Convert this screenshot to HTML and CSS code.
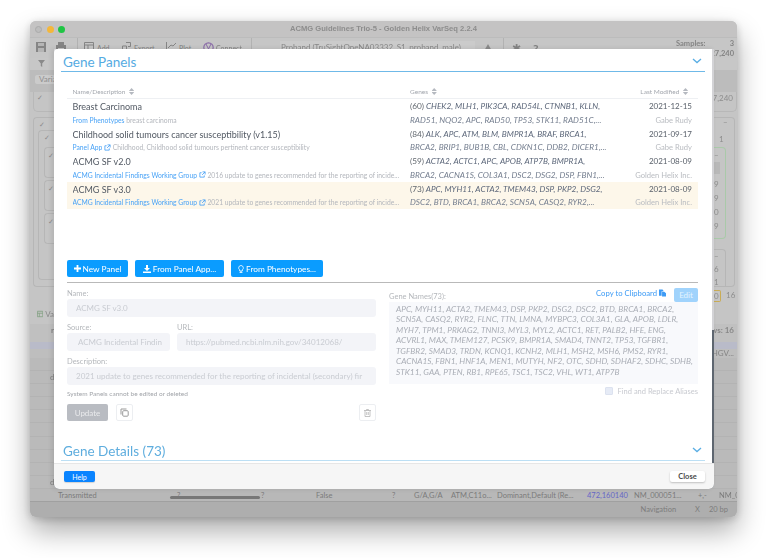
FILE: index.html
```html
<!DOCTYPE html>
<html lang="en">
<head>
<meta charset="utf-8">
<title>ACMG Guidelines Trio-5 - Golden Helix VarSeq 2.2.4</title>
<link rel="stylesheet" href="styles.css">
</head>
<body>
<div class="desktop">
  <div class="window">
    <div class="backdrop">
      <div class="titlebar">
        <span class="light l-grey"></span><span class="light l-yellow"></span><span class="light l-green"></span>
        <span class="title">ACMG Guidelines Trio-5 - Golden Helix VarSeq 2.2.4</span>
      </div>
      <div class="toolbar">
        <svg class="tool" width="10" height="10" viewBox="0 0 10 10"><path d="M0 0h10v10H0z" fill="#858585"/><path d="M2 1h6v3H2zM2 6h6v4H2z" fill="#b5b5b5"/></svg>
        <svg class="tool t2" width="10" height="10" viewBox="0 0 10 10"><path d="M2 0h6v3H2zM0 3h10v5H8V6H2v2H0zM3 7h4v3H3z" fill="#858585"/></svg>
        <span class="sep"></span>
        <span class="tbtn t-add"><svg width="10" height="9" viewBox="0 0 10 9"><path d="M.5.5h9v8h-9zM.5 3h9M4 3v5.5" fill="none" stroke="#858585"/></svg>Add</span>
        <span class="tbtn t-export"><svg width="9" height="9" viewBox="0 0 9 9"><path d="M.5 4h4v4.500h-4zM4 .5h4.500v4H6" fill="none" stroke="#858585"/></svg>Export</span>
        <span class="tbtn t-plot"><svg width="10" height="9" viewBox="0 0 10 9"><path d="M.5 0v8.500H10M2 6l3-3 2 1 3-3" fill="none" stroke="#858585"/></svg>Plot</span>
        <span class="tbtn t-connect"><svg width="11" height="11" viewBox="0 0 11 11"><circle cx="5.500" cy="5.500" r="4.700" fill="none" stroke="#8a6ba8" stroke-width="1.200"/><path d="M3 2l2.500 5L8 2" fill="none" stroke="#8a6ba8"/></svg>Connect</span>
        <span class="sep s2"></span>
        <span class="sel">Proband (TruSightOneNA03332_S1_proband_male)</span>
        <span class="tri"></span>
        <span class="sep s3"></span>
        <span class="gear">✱</span><span class="qm">?</span>
        <span class="samples"><span class="sline"><span>Samples:</span><span>3</span></span><span class="sline sr">27,240</span></span>
      </div>
      <div class="band-light"><svg width="7" height="7" viewBox="0 0 7 7"><path d="M0 0h7L4.200 3.500V7L2.800 6V3.500z" fill="#8a8a8a"/></svg></div>
      <div class="band-dark"><span class="pill">Varia</span></div>
      <div class="work">
        <div class="lside">
          <div class="count-row"><span class="chk">✓</span></div>
          <div class="panel-outer">
            <span class="chk">✓</span>
            <div class="panel-in">
              <span class="chk">✓</span>
              <div class="sub-box"><span class="chk">✓</span></div>
              <div class="sub-box"><span class="chk">✓</span></div>
              <div class="sub-box"><span class="chk">✓</span></div>
            </div>
          </div>
          <div class="tab-row"><svg width="8" height="8" viewBox="0 0 8 8"><path d="M.5.5h7v7h-7zM.5 3h7M3 3v4.500" fill="none" stroke="#7f9f7f"/></svg><span>Va</span></div>
        </div>
        <div class="rside">
          <div class="r-count">27,240</div>
          <div class="r-panel">
            <div class="minus">–</div>
            <div class="num">1</div>
            <div class="green-box"><div>–</div><div class="cell"></div><div>9</div><div>9</div><div>0</div><div>9</div></div>
            <div class="plain-box"><div>–</div><div>6</div><div>1</div></div>
          </div>
          <div class="tot"><span class="orange">0</span><span>16</span></div>
        </div>
      </div>
      <div class="tabs2"><span class="pill2">ria</span><span class="rowcount">Rows: 16</span></div>
      <div class="thead2"></div>
      <div class="hgv-row"><span>HGV...</span></div>
      <div class="grid-rows">
        <div class="grow"></div><div class="grow">d</div><div class="grow"></div><div class="grow"></div><div class="grow"></div>
        <div class="grow"></div><div class="grow"></div><div class="grow"></div><div class="grow"></div><div class="grow">d</div>
      </div>
      <div class="data-row">
        <span class="c-a">Transmitted</span><span class="c-b">?</span><span class="c-c">?</span><span class="c-d">False</span><span class="c-e">?</span><span class="c-f">G/A,G/A</span><span class="c-g">ATM,C11o...</span><span class="c-h">Dominant,Default (Re...</span><span class="c-i">472,160140</span><span class="c-j">NM_000051...</span><span class="c-k">+,-</span><span class="c-l">NM_0</span>
      </div>
      <div class="status"><span class="hscroll"></span><span>Navigation</span><span class="st-x">X</span><span>20 bp</span></div>
    </div>

    <div class="modal">
      <div class="modal-body">
        <div class="sec-head"><h2>Gene Panels</h2><svg class="chev" width="10" height="6" viewBox="0 0 10 6"><path d="M1 1l4 3.600L9 1" fill="none" stroke="#5aaee4" stroke-width="1.300"/></svg></div>
        <div class="tbl">
          <div class="row head"><div class="col-n">Name/Description <i class="sort"></i></div><div class="col-g">Genes <i class="sort"></i></div><div class="col-d">Last Modified <i class="sort"></i></div></div>
          <div class="row item">
            <div class="col-n"><div class="nm">Breast Carcinoma</div><div class="sb"><a>From Phenotypes</a> breast carcinoma</div></div>
            <div class="col-g"><div><b>(60)</b> CHEK2, MLH1, PIK3CA, RAD54L, CTNNB1, KLLN,</div><div class="g2">RAD51, NQO2, APC, RAD50, TP53, STK11, RAD51C,...</div></div>
            <div class="col-d"><div class="dt">2021-12-15</div><div class="by">Gabe Rudy</div></div>
          </div>
          <div class="row item">
            <div class="col-n"><div class="nm">Childhood solid tumours cancer susceptibility (v1.15)</div><div class="sb"><a>Panel App <svg class="ext" viewBox="0 0 8 8"><path d="M6 5v2H1V2h2M4 1h3v3M7 1L3.500 4.500" fill="none" stroke="#3d9bf5" stroke-width=".9"/></svg></a> Childhood, Childhood solid tumours pertinent cancer susceptibility</div></div>
            <div class="col-g"><div><b>(84)</b> ALK, APC, ATM, BLM, BMPR1A, BRAF, BRCA1,</div><div class="g2">BRCA2, BRIP1, BUB1B, CBL, CDKN1C, DDB2, DICER1,...</div></div>
            <div class="col-d"><div class="dt">2021-09-17</div><div class="by">Gabe Rudy</div></div>
          </div>
          <div class="row item">
            <div class="col-n"><div class="nm">ACMG SF v2.0</div><div class="sb"><a>ACMG Incidental Findings Working Group <svg class="ext" viewBox="0 0 8 8"><path d="M6 5v2H1V2h2M4 1h3v3M7 1L3.500 4.500" fill="none" stroke="#3d9bf5" stroke-width=".9"/></svg></a> 2016 update to genes recommended for the reporting of incide...</div></div>
            <div class="col-g"><div><b>(59)</b> ACTA2, ACTC1, APC, APOB, ATP7B, BMPR1A,</div><div class="g2">BRCA2, CACNA1S, COL3A1, DSC2, DSG2, DSP, FBN1,...</div></div>
            <div class="col-d"><div class="dt">2021-08-09</div><div class="by">Golden Helix Inc.</div></div>
          </div>
          <div class="row item on">
            <div class="col-n"><div class="nm">ACMG SF v3.0</div><div class="sb"><a>ACMG Incidental Findings Working Group <svg class="ext" viewBox="0 0 8 8"><path d="M6 5v2H1V2h2M4 1h3v3M7 1L3.500 4.500" fill="none" stroke="#3d9bf5" stroke-width=".9"/></svg></a> 2021 update to genes recommended for the reporting of incide...</div></div>
            <div class="col-g"><div><b>(73)</b> APC, MYH11, ACTA2, TMEM43, DSP, PKP2, DSG2,</div><div class="g2">DSC2, BTD, BRCA1, BRCA2, SCN5A, CASQ2, RYR2,...</div></div>
            <div class="col-d"><div class="dt">2021-08-09</div><div class="by">Golden Helix Inc.</div></div>
          </div>
        </div>
        <div class="actions">
          <button class="btn b1"><svg width="7" height="7" viewBox="0 0 7 7"><path d="M2.600 0h1.800v2.600H7v1.800H4.400V7H2.600V4.400H0V2.600h2.600z" fill="#fff"/></svg> New Panel</button>
          <button class="btn b2"><svg width="8" height="8" viewBox="0 0 8 8"><path d="M3 0h2v3h2L4 6 1 3h2zM0 6.400h8V8H0z" fill="#fff"/></svg> From Panel App...</button>
          <button class="btn b3"><svg width="6" height="8" viewBox="0 0 6 8"><path d="M3 .5a2.400 2.400 0 0 1 1.400 4.300V6H1.600V4.800A2.400 2.400 0 0 1 3 .5zM2 7h2v.8H2z" fill="none" stroke="#fff" stroke-width=".8"/></svg> From Phenotypes...</button>
        </div>
        <div class="editor">
          <div class="form">
            <label class="lb l1">Name:</label>
            <div class="inp">ACMG SF v3.0</div>
            <div class="two">
              <div class="f-src"><label class="lb">Source:</label><div class="inp cut">ACMG Incidental Findin</div></div>
              <div class="f-url"><label class="lb">URL:</label><div class="inp">https://pubmed.ncbi.nlm.nih.gov/34012068/</div></div>
            </div>
            <label class="lb">Description:</label>
            <div class="inp cut">2021 update to genes recommended for the reporting of incidental (secondary) fir</div>
            <div class="note">System Panels cannot be edited or deleted</div>
            <div class="form-btns">
              <button class="upd">Update</button>
              <button class="ico"><svg width="9" height="9" viewBox="0 0 9 9"><path d="M1 6.500V1h5.500" fill="none" stroke="#9a9a9a"/><rect x="2.700" y="2.700" width="5.500" height="5.500" rx="1" fill="none" stroke="#9a9a9a"/></svg></button>
              <button class="ico trash"><svg width="7" height="8" viewBox="0 0 7 8"><path d="M0 1.500h7M2.500 1.500V.5h2v1M1 1.500v6h5v-6M2.700 3v3M4.300 3v3" fill="none" stroke="#b5b5b5" stroke-width=".8"/></svg></button>
            </div>
          </div>
          <div class="genes">
            <div class="genes-top">
              <span class="lb gl">Gene Names(73):</span>
              <span class="copy">Copy to Clipboard <svg width="7" height="8" viewBox="0 0 8 8"><path d="M0 0h4l1 1v1H3v5H0zM3.500 2.500H6L8 4.200V8H3.500z" fill="#3d9bf5"/></svg></span>
              <button class="edit">Edit</button>
            </div>
            <div class="area"><i>APC, MYH11, ACTA2, TMEM43, DSP, PKP2, DSG2, DSC2, BTD, BRCA1, BRCA2,<br>SCN5A, CASQ2, RYR2, FLNC, TTN, LMNA, MYBPC3, COL3A1, GLA, APOB, LDLR,<br>MYH7, TPM1, PRKAG2, TNNI3, MYL3, MYL2, ACTC1, RET, PALB2, HFE, ENG,<br>ACVRL1, MAX, TMEM127, PCSK9, BMPR1A, SMAD4, TNNT2, TP53, TGFBR1,<br>TGFBR2, SMAD3, TRDN, KCNQ1, KCNH2, MLH1, MSH2, MSH6, PMS2, RYR1,<br>CACNA1S, FBN1, HNF1A, MEN1, MUTYH, NF2, OTC, SDHD, SDHAF2, SDHC, SDHB,<br>STK11, GAA, PTEN, RB1, RPE65, TSC1, TSC2, VHL, WT1, ATP7B</i></div>
            <div class="alias"><span class="cb"></span>Find and Replace Aliases</div>
          </div>
        </div>
        <div class="sec-head details"><h2>Gene Details (73)</h2><svg class="chev" width="10" height="6" viewBox="0 0 10 6"><path d="M1 1l4 3.600L9 1" fill="none" stroke="#5aaee4" stroke-width="1.300"/></svg></div>
      </div>
      <div class="modal-foot"><button class="help">Help</button><button class="close">Close</button></div>
    </div>
  </div>
</div>
</body>
</html>
```
FILE: styles.css
```css
* { box-sizing: border-box; }
html, body { margin: 0; height: 100%; background: #fff; overflow: hidden; }
body { font-family: Lato, "Liberation Sans", sans-serif; }
button { font-family: inherit; border: 0; padding: 0; }
.desktop { padding: 21px 31px 0 30px; filter: blur(.5px); }
.window { position: relative; width: 707px; height: 496px; border-radius: 6px; box-shadow: 0 14px 28px rgba(0,0,0,.33), 0 2px 8px rgba(0,0,0,.18); }
.backdrop { height: 100%; display: flex; flex-direction: column; background: #bcbcbc; border-radius: 6px; overflow: hidden; color: #848484; font-size: 8px; }

.titlebar { position: relative; height: 16px; flex: none; background: #c4c3c3; display: flex; align-items: center; padding-left: 5px; gap: 4px; }
.light { width: 7px; height: 7px; border-radius: 50%; }
.l-grey { background: #bdbdbd; border: 1px solid #aaa; }
.l-yellow { background: #f4b73a; margin-left: 1px; }
.l-green { background: #1fc544; }
.title { position: absolute; left: 0; right: 0; top: 3px; text-align: center; font: bold 7.6px "Liberation Sans", sans-serif; color: #8d8d8d; }

.toolbar { height: 21px; flex: none; background: #c6c6c6; border-top: 1px solid #bcbcbc; display: flex; align-items: flex-start; font-size: 7px; }
.tool { margin: 4px 0 0 6px; flex: none; }
.t2 { margin-left: 10px; }
.sep { width: 1px; height: 19px; background: #b2b2b2; margin-left: 11px; flex: none; }
.tbtn { margin-top: 4px; display: flex; align-items: flex-start; gap: 3px; white-space: nowrap; color: #7f7f7f; line-height: 12px; flex: none; }
.t-add { margin-left: 6px; width: 38px; }
.t-export { width: 44px; }
.t-plot { width: 37px; }
.t-connect { width: 48px; gap: 2px; }
.s2 { margin-left: 0; }
.sel { margin: 3px 0 0 28px; width: 195px; height: 13px; line-height: 12px; font-size: 8px; white-space: nowrap; color: #878787; background: #cbcbcb; padding-left: 1px; flex: none; }
.tri { margin: 6px 0 0 9px; border-left: 4px solid transparent; border-right: 4px solid transparent; border-bottom: 7px solid #8a8a8a; flex: none; }
.s3 { margin-left: 11px; }
.gear { margin: 3px 0 0 8px; font-size: 11px; }
.qm { margin: 3px 0 0 12px; font-size: 12px; font-weight: bold; }
.samples { margin-left: auto; width: 61px; padding: 1px 3px 0 0; font-weight: bold; font-size: 7.5px; flex: none; }
.sline { display: flex; justify-content: space-between; line-height: 10px; }
.sr { justify-content: flex-end; }

.band-light { height: 12px; flex: none; background: #c7c7c7; padding: 2px 0 0 8px; }
.band-light svg { display: block; }
.band-dark { height: 22px; flex: none; background: #bcbcbc; padding: 4px 0 0 5px; }
.pill { display: inline-block; width: 40px; height: 9px; line-height: 9px; padding-left: 4px; background: #cbcbcb; border-radius: 2px; color: #909090; }

.work { height: 232px; flex: none; display: flex; justify-content: space-between; background: #c5c5c5; }
.lside { width: 24px; padding-left: 3px; }
.count-row { height: 20px; border: 1px solid #b8b8b8; border-top: 0; border-right: 0; border-radius: 0 0 0 5px; padding-left: 3px; }
.chk { display: block; font-size: 7px; color: #8b8b8b; line-height: 10px; }
.panel-outer { height: 170px; border: 1px solid #b6b6b6; border-right: 0; border-radius: 4px 0 0 4px; padding: 1px 0 0 5px; margin-top: 5px; }
.panel-in { border: 1px solid #b6b6b6; border-right: 0; border-radius: 4px 0 0 4px; height: 150px; margin: 1px 0 0 -1px; padding: 1px 0 0 5px; }
.sub-box { height: 31px; border: 1px solid #b6b6b6; border-right: 0; border-radius: 4px 0 0 4px; margin: 2px 0 0 0; padding: 2px 0 0 3px; }
.sub-box:first-of-type { margin-top: 5px; }
.tab-row { margin-top: 19px; height: 16px; display: flex; align-items: center; gap: 2px; padding-left: 4px; color: #8a8a8a; white-space: nowrap; }
.rside { width: 23px; font-size: 8px; color: #8d8d8d; }
.r-count { height: 20px; display: flex; justify-content: flex-end; padding: 1px 3px 0 0; white-space: nowrap; border-bottom: 1px solid #b8b8b8; border-right: 1px solid #b8b8b8; border-radius: 0 0 5px 0; }
.r-panel { height: 170px; margin-top: 5px; border: 1px solid #b6b6b6; border-left: 0; border-radius: 0 4px 4px 0; margin-right: 2px; }
.minus { padding-left: 9px; line-height: 8px; }
.num { padding-left: 5px; margin-top: 8px; line-height: 10px; }
.green-box { height: 92px; margin-top: 3px; border: 1px solid #a9c9a9; border-left: 0; border-radius: 0 4px 4px 0; width: 12px; line-height: 14px; }
.cell { height: 12px; width: 6px; background: #b8b8b8; margin-bottom: 3px; }
.plain-box { height: 37px; margin-top: 10px; border: 1px solid #b6b6b6; border-left: 0; border-bottom: 0; border-radius: 0 4px 0 0; width: 12px; line-height: 13px; }
.tot { display: flex; gap: 5px; margin-top: 3px; }
.orange { width: 7px; border: 1px solid #c9ac55; border-left: 0; border-radius: 0 2px 2px 0; height: 12px; line-height: 10px; }

.tabs2 { height: 18px; flex: none; background: #c0c0c0; display: flex; justify-content: space-between; padding: 1px 3px 0 21px; font-weight: bold; white-space: nowrap; }
.rowcount { color: #888; }
.thead2 { height: 7px; flex: none; background: #b9bbc9; }
.hgv-row { height: 9px; flex: none; background: #bebebe; text-align: right; padding-right: 3px; line-height: 9px; white-space: nowrap; }
.grid-rows { flex: 1; min-height: 0; background: #bababa; overflow: hidden; }
.grow { height: 13.100px; border-bottom: 1px solid #b3b3b3; color: #808080; line-height: 12px; padding-left: 20px; }

.data-row { height: 12px; flex: none; display: flex; align-items: center; background: #b8b8b8; white-space: nowrap; font-size: 7.5px; color: #7b7b7b; }
.c-a { margin-left: 28px; width: 119px; flex: none; }
.c-b { width: 84px; flex: none; }
.c-c { width: 55px; flex: none; }
.c-d { width: 76px; flex: none; }
.c-e { width: 22px; flex: none; }
.c-f { width: 37px; flex: none; }
.c-g { width: 46px; flex: none; }
.c-h { width: 90px; flex: none; }
.c-i { width: 47px; color: #6666c6; flex: none; }
.c-j { width: 64px; flex: none; }
.c-k { width: 21px; flex: none; }
.c-l { overflow: hidden; }
.hscroll { width: 90px; height: 3px; border-radius: 2px; background: #777; margin: -24px auto 0 140px; flex: none; }
.status { height: 16px; flex: none; background: #aeaeae; border-top: 1px solid #a0a0a0; display: flex; align-items: center; font-size: 7.5px; padding-right: 9px; color: #7d7d7d; }
.st-x { margin: 0 9px 0 19px; }

.modal { position: absolute; left: 24px; top: 28px; width: 660px; height: 440px; display: flex; flex-direction: column; border-radius: 0 0 5px 5px; overflow: hidden; background: linear-gradient(#d3d3d6 0, #d3d3d6 281px, #5e6670 281px); box-shadow: -2px 0 5px rgba(0,0,0,.1); }
.modal-body { flex: 1; min-height: 0; width: 658px; background: #fff; padding: 0 7px; border-radius: 4px 0 0 0; display: flex; flex-direction: column; }
.sec-head { height: 23px; flex: none; display: flex; align-items: flex-end; justify-content: space-between; border-bottom: 1.500px solid #6fb9e8; padding: 0 3px 0 2px; }
.sec-head h2 { margin: 0; font-size: 13.500px; font-weight: 400; color: #55abe2; line-height: 18px; }
.chev { margin-bottom: 7px; }

.tbl { margin: 15px 7px 0 6px; flex: none; }
.row { display: flex; padding: 0 6px 0 5.500px; }
.head { height: 12px; line-height: 9px; font-size: 6.500px; color: #a3a7ae; border-bottom: 1px solid #eef0f3; }
.sort { display: inline-block; width: 5px; height: 7px; margin-left: 2px; vertical-align: -1px; background: linear-gradient(#b5b9c0 0 43%, transparent 43% 57%, #b5b9c0 57%); clip-path: polygon(50% 0, 100% 40%, 100% 43%, 0 43%, 0 40%, 0 57%, 100% 57%, 100% 60%, 50% 100%, 0 60%, 0 40%); }
.col-n { width: 337.500px; flex: none; white-space: nowrap; overflow: hidden; }
.col-g { flex: 1; white-space: nowrap; overflow: hidden; }
.col-d { width: 80px; flex: none; text-align: right; }
.head .col-d { padding-right: 4px; }
.item { height: 27.500px; padding-top: 1px; }
.on { background: #fdf7ea; }
.item .col-n, .item .col-g, .item .col-d { line-height: 13.500px; }
.nm { font-size: 9px; color: #525963; }
.sb { font-size: 6.750px; color: #b3b6bc; }
.sb a { color: #4aa3f6; }
.ext { width: 7px; height: 7px; vertical-align: -0.5px; }
.item .col-g { font-size: 8.250px; font-style: italic; color: #5b6679; }
.head .col-g { font-style: normal; }
.col-g b { font-weight: 400; font-style: normal; color: #62686f; }
.g2 { color: #737d8e; }
.dt { font-size: 8px; color: #5a616b; }
.by { font-size: 7.600px; color: #b9bcc1; }

.actions { margin: 51px 0 0 6px; display: flex; gap: 7px; flex: none; }
.btn { height: 17px; background: #0a9cff; color: #fff; font-size: 8.300px; border-radius: 2px; display: flex; align-items: center; justify-content: center; gap: 2px; }
.b1 { width: 61px; }
.b2 { width: 89px; }
.b3 { width: 92px; }

.editor { display: flex; margin: 5px 7px 0 6px; border-top: 1px solid #b9b9b9; flex: none; }
.form { width: 309px; flex: none; }
.lb { display: block; font-size: 7.500px; color: #b4b7bb; line-height: 9px; padding-top: 2px; }
.l1 { padding-top: 6px; }
.inp { height: 18px; line-height: 18px; font-size: 8px; color: #c9ccd2; background: #f3f4f8; border-radius: 3px; padding: 0 9px; white-space: nowrap; overflow: hidden; margin: 1px 0 4px; }
.inp.cut { text-overflow: clip; }
.two { display: flex; gap: 7px; }
.f-src { width: 103px; flex: none; }
.f-url { flex: 1; min-width: 0; }
.f-src .inp { padding: 0 9px 0 11px; }
.note { font-size: 6.500px; color: #a2a5aa; line-height: 10px; margin-top: 1px; }
.form-btns { display: flex; margin-top: 5px; gap: 8px; }
.upd { width: 41px; height: 17px; border-radius: 2px; background: #b9bcc2; color: #e9eaec; font-size: 8px; }
.ico { width: 17px; height: 17px; background: #fff; border: 1px solid #eceef1; border-radius: 2px; display: flex; align-items: center; justify-content: center; }
.trash { margin-left: auto; }

.genes { flex: 1; margin-left: 13px; min-width: 0; }
.genes-top { display: flex; align-items: flex-end; height: 19px; }
.gl { padding: 0; margin-bottom: 1px; }
.copy { margin-left: auto; font-size: 7.700px; color: #3d9bf5; line-height: 12px; margin-bottom: 3px; white-space: nowrap; }
.copy svg { vertical-align: -1px; }
.edit { width: 24px; height: 14px; margin-left: 8px; background: #a0d3fc; color: #e4f3fe; font-size: 8px; border-radius: 2px; }
.area { height: 82px; background: #f8f9fc; padding: 2px 7px; font-size: 8.300px; line-height: 10.450px; color: #aaaeb6; white-space: nowrap; overflow: hidden; }
.alias { display: flex; align-items: center; justify-content: flex-end; font-size: 7.500px; color: #c8cad0; height: 12px; margin-top: 1px; gap: 5px; }
.cb { width: 8px; height: 8px; background: #e6ebf6; border: 1px solid #dce2ef; border-radius: 1px; }

.details { margin-top: 22px; height: 18px; border-bottom: 1px solid #bcdff4; }
.details h2 { font-size: 13.500px; color: #5eadde; }

.modal-foot { height: 26px; flex: none; background: #f6f6f6; border-top: 1px solid #e6e6e6; display: flex; align-items: center; justify-content: space-between; padding: 0 9px 0 10px; }
.help { width: 31px; height: 11px; background: #0a84ff; color: #fff; font-size: 7px; border-radius: 2px; box-shadow: 0 1px 1px rgba(0,0,0,.15); }
.close { width: 35px; height: 11px; background: #fff; color: #4a4a4a; font-size: 7.500px; font-weight: bold; border-radius: 2px; box-shadow: 0 1px 2px rgba(0,0,0,.22); }
```
